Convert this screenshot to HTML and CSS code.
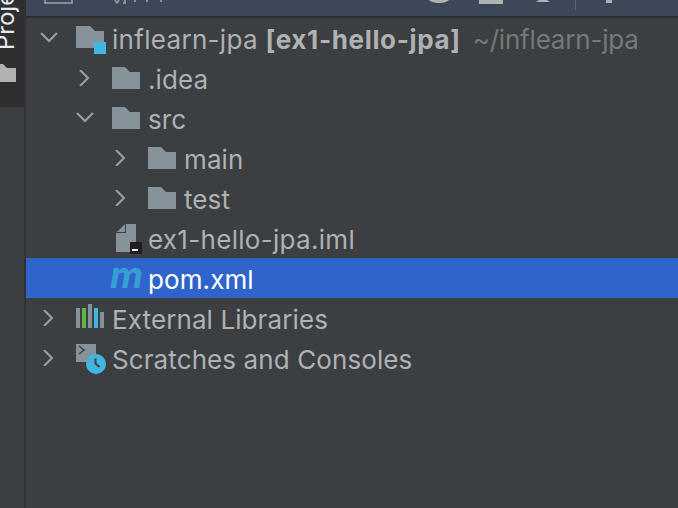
FILE: index.html
```html
<!DOCTYPE html>
<html lang="en">
<head>
<meta charset="UTF-8">
<meta name="viewport" content="width=device-width, initial-scale=1.0">
<title>Project</title>
<link rel="stylesheet" href="styles.css">
</head>
<body>
<div class="window">
    <div class="side-strip">
        <div class="side-tab">
            <span class="side-label">Proje</span>
            <svg class="side-folder" width="16" height="18" viewBox="0 0 16 18"><path d="M0 0h3l4 4h9v14H0z" fill="#afb1b3"/></svg>
        </div>
    </div>
    <div class="panel">
        <div class="toolbar">
            <svg class="tool-box" width="30" height="4" viewBox="0 0 30 4"><path d="M1 0v3h27V0" fill="none" stroke="#9ea3a8" stroke-width="1.5"/></svg>
            <svg class="tool-tail" width="54" height="4" viewBox="0 0 54 4"><path d="M2 0l2 3 2-3M12 0v3h-2M22 0v2M34 0v2M48 0v2" fill="none" stroke="#8a9097" stroke-width="2"/></svg>
            <svg class="tool-globe" width="24" height="4" viewBox="0 0 24 4"><path d="M2 0c3 4 17 4 20 0z" fill="#afb1b3"/></svg>
            <span class="tool-square"></span>
            <svg class="tool-pin" width="14" height="2" viewBox="0 0 14 2"><path d="M3 0h8l3 2H0z" fill="#afb1b3"/></svg>
            <span class="tool-sep"></span>
            <span class="tool-dot"></span>
        </div>
        <div class="tree">
            <div class="row depth0">
                <svg class="chev" width="18" height="16" viewBox="0 0 18 16"><path d="M1 3l8 8 8-8"/></svg>
                <svg class="icon icon-root" width="30" height="28" viewBox="0 0 30 28"><path d="M0 0h14l5 5h9v17H0z" fill="#87939a"/><rect x="18" y="16" width="12" height="12" fill="#40b6e0"/></svg>
                <span class="name wide">inflearn-jpa <b>[ex1-hello-jpa]</b></span>
                <span class="path">~/inflearn-jpa</span>
            </div>
            <div class="row depth1">
                <svg class="chev" width="18" height="16" viewBox="0 0 18 16"><path d="M4 0l8 8-8 8"/></svg>
                <svg class="icon" width="28" height="22" viewBox="0 0 28 22"><path d="M0 0h13l5 5h10v17H0z" fill="#87939a"/></svg>
                <span class="name">.idea</span>
            </div>
            <div class="row depth1">
                <svg class="chev" width="18" height="16" viewBox="0 0 18 16"><path d="M1 3l8 8 8-8"/></svg>
                <svg class="icon" width="28" height="22" viewBox="0 0 28 22"><path d="M0 0h13l5 5h10v17H0z" fill="#87939a"/></svg>
                <span class="name">src</span>
            </div>
            <div class="row depth2">
                <svg class="chev" width="18" height="16" viewBox="0 0 18 16"><path d="M4 0l8 8-8 8"/></svg>
                <svg class="icon" width="28" height="22" viewBox="0 0 28 22"><path d="M0 0h13l5 5h10v17H0z" fill="#87939a"/></svg>
                <span class="name">main</span>
            </div>
            <div class="row depth2">
                <svg class="chev" width="18" height="16" viewBox="0 0 18 16"><path d="M4 0l8 8-8 8"/></svg>
                <svg class="icon" width="28" height="22" viewBox="0 0 28 22"><path d="M0 0h13l5 5h10v17H0z" fill="#87939a"/></svg>
                <span class="name">test</span>
            </div>
            <div class="row depth1">
                <span class="chev"></span>
                <svg class="icon icon-file" width="30" height="30" viewBox="0 0 30 30"><path d="M10 0h10v28H0V9h10z" fill="#87939a"/><path d="M9 0v8H1z" fill="#87939a"/><rect x="14" y="18" width="12" height="12" fill="#231f20"/><rect x="16" y="25" width="6" height="2" fill="#eee"/></svg>
                <span class="name wide">ex1-hello-jpa.iml</span>
            </div>
            <div class="row depth1 selected">
                <span class="chev"></span>
                <span class="icon icon-maven">m</span>
                <span class="name">pom.xml</span>
            </div>
            <div class="row depth0">
                <svg class="chev" width="18" height="16" viewBox="0 0 18 16"><path d="M4 0l8 8-8 8"/></svg>
                <svg class="icon icon-libs" width="28" height="24" viewBox="0 0 28 24"><rect x="0" y="4" width="4" height="20" fill="#87939a"/><rect x="6" y="4" width="4" height="20" fill="#62b543"/><rect x="12" y="0" width="4" height="24" fill="#87939a"/><rect x="18" y="4" width="4" height="20" fill="#40b6e0"/><rect x="24" y="8" width="4" height="16" fill="#87939a"/></svg>
                <span class="name">External Libraries</span>
            </div>
            <div class="row depth0">
                <svg class="chev" width="18" height="16" viewBox="0 0 18 16"><path d="M4 0l8 8-8 8"/></svg>
                <svg class="icon icon-scratch" width="31" height="31" viewBox="0 0 31 31"><path d="M0 0h20v18H0z" fill="#87939a"/><path d="M3 2l5 4-5 4" fill="none" stroke="#3c3f41" stroke-width="1.5"/><circle cx="20" cy="20" r="10" fill="#40b6e0"/><path d="M19.500 14.500v5l4 3.500" fill="none" stroke="#3c3f41" stroke-width="2"/></svg>
                <span class="name">Scratches and Consoles</span>
            </div>
        </div>
    </div>
</div>
</body>
</html>
```

FILE: styles.css
```css
html, body {
    height: 100%;
    margin: 0;
    overflow: hidden;
}

body {
    background-color: #3c3f41;
    color: #afb1b3;
    font-family: Inter, "Noto Sans", sans-serif;
    font-size: 26px;
}

.window {
    display: flex;
    height: 508px;
}

/* left tool window strip */
.side-strip {
    width: 24px;
    flex-shrink: 0;
    border-right: 2px solid #323232;
}

.side-tab {
    display: flex;
    flex-direction: column;
    height: 107px;
    background-color: #2d2f31;
    overflow: hidden;
}

.side-label {
    writing-mode: vertical-rl;
    transform: rotate(180deg);
    height: 50px;
    width: 24px;
    margin-left: -6px;
    line-height: 24px;
    color: #e8e8e8;
    font-size: 24px;
    white-space: nowrap;
    text-align: left;
}

.side-folder {
    margin-top: 14px;
}

.panel {
    flex: 1;
    min-width: 0;
}

.toolbar {
    display: flex;
    align-items: flex-start;
    height: 16px;
    padding-left: 18px;
    background-color: #3c4857;
    border-bottom: 2px solid #2e2e2e;
}

.tool-box {
    margin-right: 39px;
}

.tool-globe {
    margin-left: 260px;
}

.tool-square {
    width: 24px;
    height: 4px;
    margin-left: 28px;
    background-color: #afb1b3;
}

.tool-pin {
    margin-left: 33px;
}

.tool-sep {
    width: 1px;
    height: 10px;
    margin-left: 25px;
    background-color: #5b6570;
}

.tool-dot {
    width: 6px;
    height: 3px;
    margin-left: 30px;
    background-color: #afb1b3;
}

.row {
    display: flex;
    align-items: center;
    height: 40px;
    white-space: nowrap;
}

.depth0 {
    padding-left: 14px;
}

.depth1 {
    padding-left: 50px;
}

.depth2 {
    padding-left: 86px;
}

/* both cells are fixed so the names line up per depth */
.chev {
    flex-shrink: 0;
    width: 18px;
    margin-right: 18px;
}

.chev path {
    fill: none;
    stroke: #9da0a2;
    stroke-width: 2;
}

.icon {
    flex-shrink: 0;
    margin-right: 8px;
}

.icon-root {
    margin-right: 6px;
    margin-top: 4px;
}

.icon-file {
    margin-left: 4px;
    margin-right: 2px;
    margin-top: 2px;
}

.icon-libs {
    margin-top: -4px;
}

.icon-scratch {
    margin-right: 5px;
    margin-top: 2px;
}

.icon-maven {
    width: 30px;
    height: 40px;
    margin-left: -2px;
    line-height: 34px;
    color: #389fd6;
    font-size: 36px;
    font-weight: 700;
    font-style: italic;
}

.name {
    margin-top: 2px;
    letter-spacing: 0.1px;
}

/* names with hyphens run a little wider */
.wide {
    letter-spacing: 0.3px;
}

.name b {
    letter-spacing: 0.65px;
}

.path {
    margin-top: 2px;
    margin-left: 12px;
    letter-spacing: -0.2px;
    color: #787878;
}

.selected {
    background-color: #2f65ca;
    color: #fff;
}
```
